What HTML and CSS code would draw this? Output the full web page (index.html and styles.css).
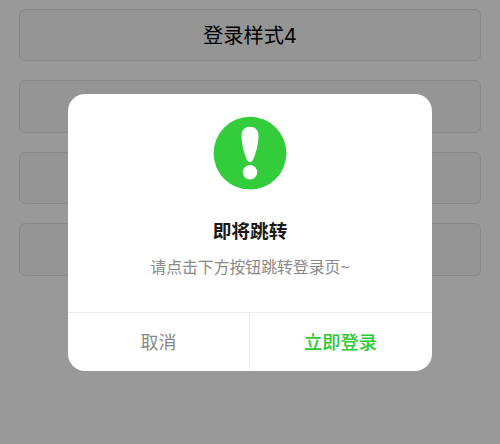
FILE: index.html
```
<!DOCTYPE html>
<html lang="zh-CN">
<head>
<meta charset="utf-8">
<title>登录样式</title>
<link rel="stylesheet" href="styles.css">
</head>
<body>
<main class="page">
  <button class="option">登录样式4</button>
  <button class="option"></button>
  <button class="option"></button>
  <button class="option"></button>
</main>
<section class="dialog" role="dialog">
  <div class="body">
    <svg class="icon" viewBox="0 0 74 74">
      <circle cx="37" cy="37.2" r="36.4" fill="#33cd3c"/>
      <path d="M37 10.7C42 10.7 45.6 14 45.5 20C45.3 28 43.2 36.5 40.8 42Q39 46.3 37 46.3Q35 46.3 33.2 42C30.8 36.5 28.7 28 28.5 20C28.4 14 32 10.7 37 10.7Z" fill="#fff"/>
      <circle cx="37" cy="56.3" r="7.2" fill="#fff"/>
    </svg>
    <h1 class="title">即将跳转</h1>
    <p class="message">请点击下方按钮跳转登录页<span class="tilde">~</span></p>
  </div>
  <div class="actions">
    <button class="action">取消</button>
    <button class="action confirm">立即登录</button>
  </div>
</section>
</body>
</html>
```
FILE: styles.css
```
* {
  box-sizing: border-box;
}

body {
  margin: 0;
  height: 444px;
  overflow: hidden;
  background: #999;
  font-family: Inter, "Noto Sans CJK SC", sans-serif;
}

button {
  padding: 0;
  font: inherit;
  background: none;
}

.page {
  display: flex;
  flex-direction: column;
  gap: 19.1px;
  padding: 8.9px 19px;
}

.option {
  height: 52.4px;
  padding-bottom: 2px;
  border: 1px solid #888;
  border-radius: 6px;
  background: #959595;
  color: #000;
  font-size: 20.2px;
}

.dialog {
  position: absolute;
  left: 68px;
  top: 94px;
  width: 364px;
  height: 277.4px;
  display: flex;
  flex-direction: column;
  overflow: hidden;
  border-radius: 17px;
  background: #fff;
}

.body {
  flex: 1;
  display: flex;
  flex-direction: column;
  align-items: center;
  padding-top: 22px;
}

.icon {
  width: 74px;
  height: 74px;
}

.title {
  margin: 27px 0 0;
  color: #1a1a1a;
  font-size: 18.7px;
  line-height: 30px;
  font-weight: 700;
}

.message {
  margin: 8px 0 0;
  color: #888;
  font-size: 15.85px;
  line-height: 26px;
}

.tilde {
  font-family: "Liberation Sans", sans-serif;
}

.actions {
  display: flex;
  height: 59px;
  border-top: 1px solid #ececec;
}

.action {
  width: 181px;
  padding-bottom: 2px;
  border: 0;
  color: #888;
  font-size: 18px;
}

.confirm {
  width: 183px;
  padding-right: 1px;
  border-left: 1px solid #ececec;
  color: #2bc934;
  font-size: 18.3px;
  font-weight: 500;
}
```
